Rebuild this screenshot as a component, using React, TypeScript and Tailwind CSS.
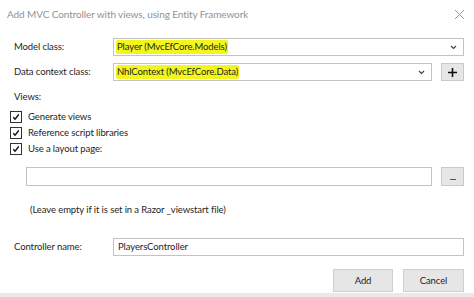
import React from "react";

function Chevron() {
  return (
    <svg width="7" height="5" viewBox="0 0 7 5" className="text-[#444]">
      <path d="M1 1 L3.5 3.5 L6 1" fill="none" stroke="currentColor" strokeWidth="1.2" />
    </svg>
  );
}

function Check({ label }: { label: string }) {
  return (
    <div className="flex h-[16px] items-center">
      <div className="ml-[10px] flex h-[12px] w-[12px] items-center justify-center border border-[#333] bg-white">
        <svg width="8" height="8" viewBox="0 0 8 8">
          <path d="M1.2 4.2 L3.1 6.2 L6.8 1.4" fill="none" stroke="#111" strokeWidth="1.5" />
        </svg>
      </div>
      <span className="ml-[6px]">{label}</span>
    </div>
  );
}

export default function App() {
  return (
    <div
      className="flex h-[297px] w-[474px] flex-col overflow-hidden bg-white text-[9.5px] leading-[14px] tracking-[-0.1px] text-[#1e1e1e]"
      style={{ fontFamily: 'Lato, "Open Sans", sans-serif' }}
    >
      {/* title bar */}
      <div className="flex h-[27px] items-center justify-between pl-[7px] pr-[9px] pt-[1px] text-[10px] text-[#929292]">
        <span>Add MVC Controller with views, using Entity Framework</span>
        <svg width="11" height="11" viewBox="0 0 11 11">
          <path d="M1 1 L10 10 M10 1 L1 10" stroke="#9a9a9a" strokeWidth="1" />
        </svg>
      </div>

      <div className="mt-[11px] flex flex-col pr-[10px]">
        <div className="flex h-[18px] items-center">
          <span className="w-[113px] pl-[14px]">Model class:</span>
          <div className="flex h-[18px] flex-1 items-center justify-between border border-[#c3c3c3] pl-[2px] pr-[6px]">
            <span className="rounded-[2px] bg-[#f5f51e] px-[1px] leading-[14px]">Player (MvcEfCore.Models)</span>
            <Chevron />
          </div>
        </div>

        <div className="mt-[7px] flex h-[18px] items-center">
          <span className="w-[113px] pl-[14px]">Data context class:</span>
          <div className="flex h-[18px] w-[319px] items-center justify-between border border-[#c3c3c3] pl-[2px] pr-[6px]">
            <span className="rounded-[2px] bg-[#f5f51e] px-[1px] leading-[14px]">NhlContext (MvcEfCore.Data)</span>
            <Chevron />
          </div>
          <div className="ml-auto flex h-[18px] w-[23px] items-center justify-center border border-[#c9c9c9] bg-[#e6e6e6]">
            <svg width="9" height="9" viewBox="0 0 9 9">
              <path d="M4.5 0 V9 M0 4.5 H9" stroke="#111" strokeWidth="1.6" />
            </svg>
          </div>
        </div>

        <div className="mt-[8px] pl-[14px] leading-[16px]">Views:</div>

        <div className="mt-[4px] flex flex-col">
          <Check label="Generate views" />
          <Check label="Reference script libraries" />
          <Check label="Use a layout page:" />
        </div>

        <div className="mt-[10px] flex items-center pl-[26px]">
          <div className="h-[19px] w-[406px] border border-[#c3c3c3]" />
          <div className="ml-auto flex h-[19px] w-[23px] items-end justify-center border border-[#c9c9c9] bg-[#e6e6e6] pb-[5px]">
            <div className="h-[1px] w-[6px] bg-[#555]" />
          </div>
        </div>

        <div className="mt-[17px] pl-[30px]">(Leave empty if it is set in a Razor _viewstart file)</div>

        <div className="mt-[21px] flex h-[18px] items-center">
          <span className="w-[113px] pl-[14px]">Controller name:</span>
          <div className="flex h-[18px] flex-1 items-center border border-[#c3c3c3] pl-[4px]">PlayersController</div>
        </div>

        <div className="mt-[13px] flex justify-end gap-[10px]">
          <div className="flex h-[23px] w-[60px] items-center justify-center border border-[#cfcfcf] bg-[#e6e6e6]">Add</div>
          <div className="flex h-[23px] w-[61px] items-center justify-center border border-[#cfcfcf] bg-[#e6e6e6]">Cancel</div>
        </div>
      </div>

      <div className="mt-auto h-[4px] bg-[#e9e9e9]" />
    </div>
  );
}
